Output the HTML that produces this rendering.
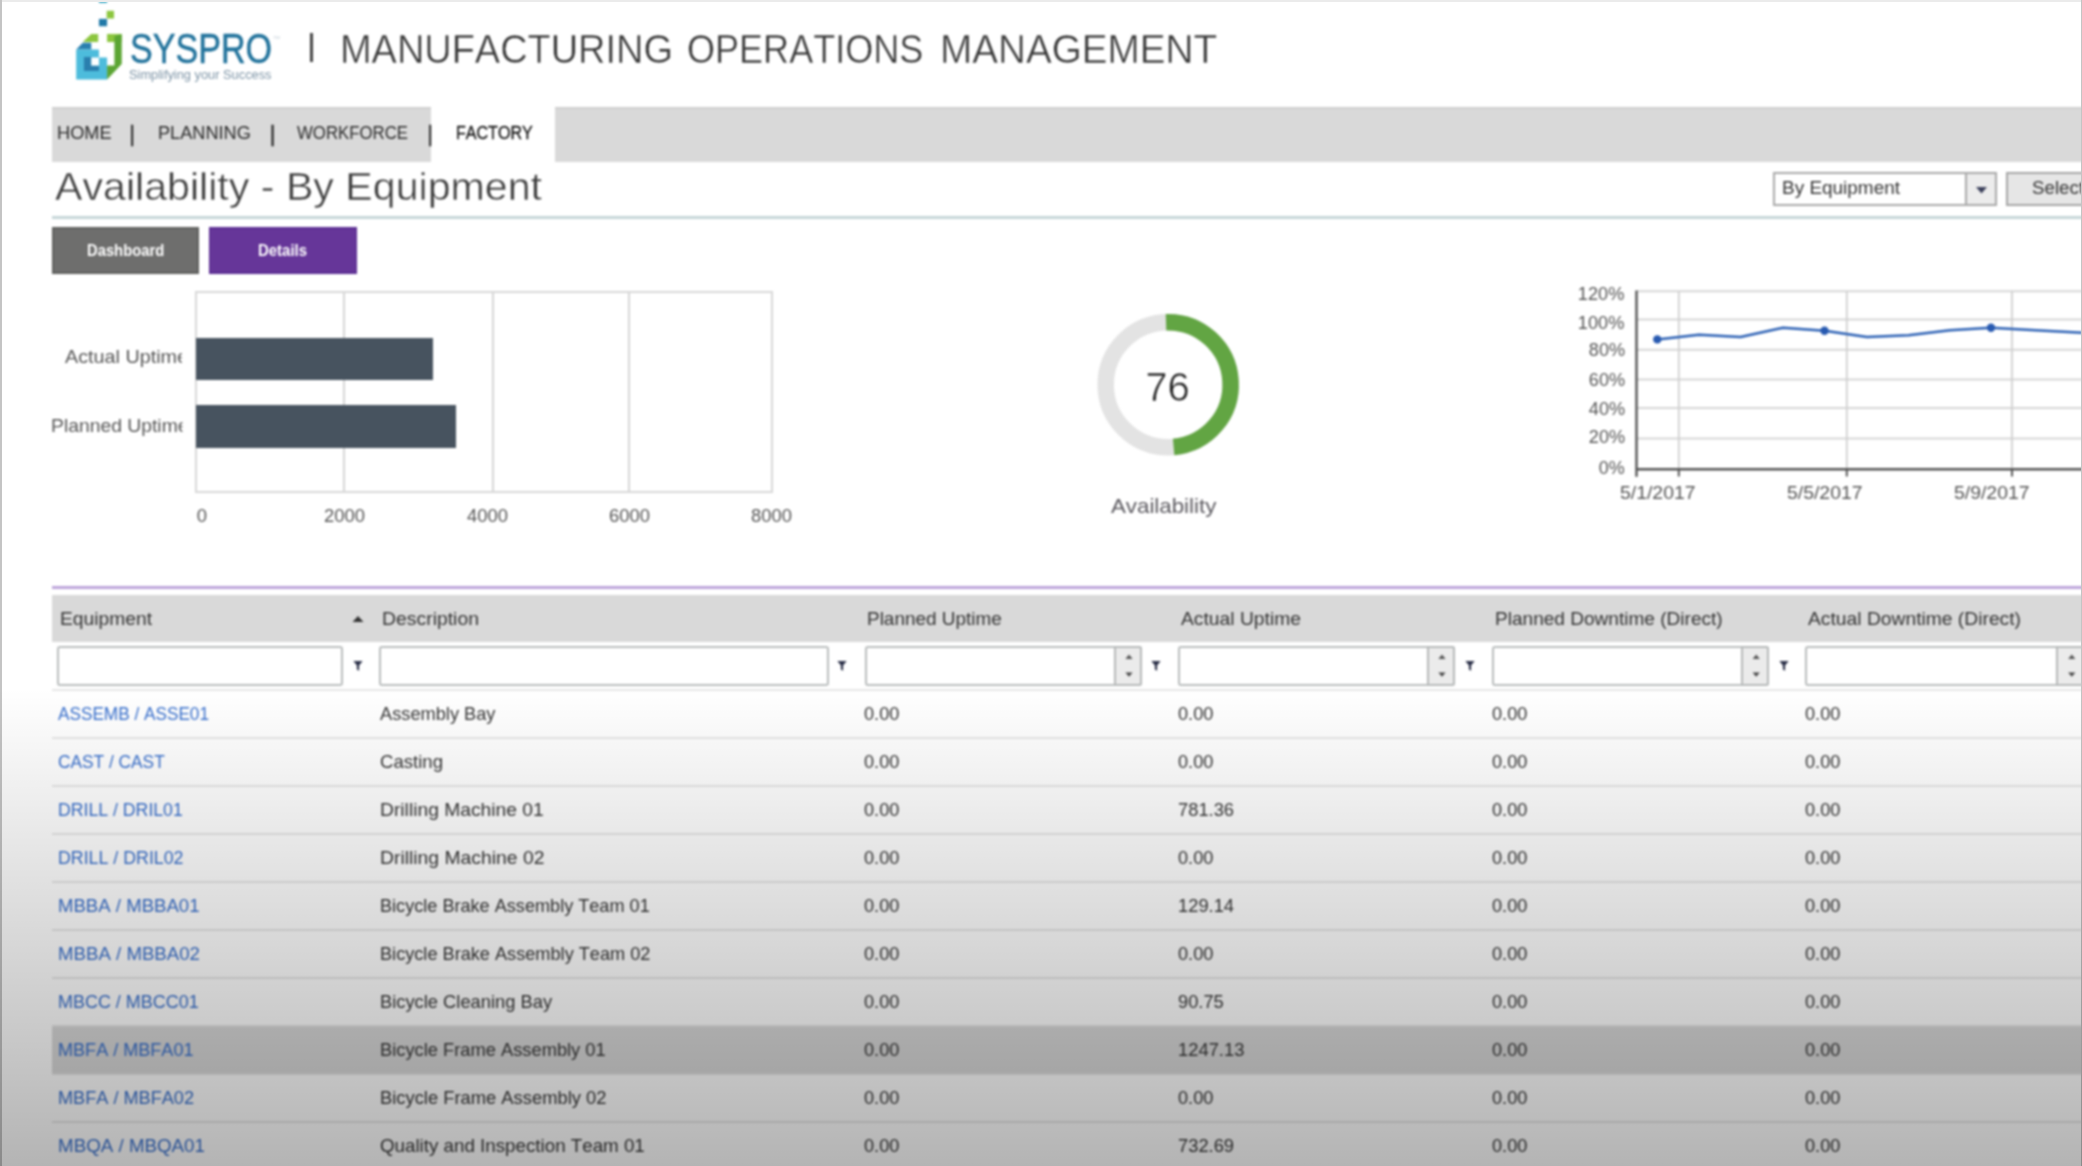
<!DOCTYPE html>
<html lang="en"><head><meta charset="utf-8"><title>SYSPRO Manufacturing Operations Management - Availability By Equipment</title>
<style>
html,body{margin:0;padding:0;background:#fff;overflow:hidden;}
body{width:2082px;height:1166px;position:relative;overflow:hidden;font-family:"Liberation Sans", sans-serif;font-kerning:none;}
#page{position:absolute;left:0;top:0;width:2082px;height:1166px;filter:blur(1px);}
#wrap{position:absolute;left:0;top:0;width:2082px;height:1166px;overflow:hidden;}
#frame{position:absolute;left:0;top:0;width:2082px;height:1166px;overflow:hidden;pointer-events:none;}
#page div,#frame div{position:absolute;box-sizing:border-box;}
#page svg{position:absolute;left:0;top:0;overflow:visible;}
.t{position:absolute;white-space:nowrap;line-height:1;display:block;}

.in{border:2px solid #b9bdbd;background:#fff;border-radius:3px;}
.sp{border:2px solid #b6b9b9;background:#ebebeb;border-radius:0 3px 3px 0;}
.row{border-top:2px solid #dcdcdc;}

</style></head><body><div id="wrap"><div id="page">
<div style="left:51.5px;top:106.5px;width:379.0px;height:55.0px;background:#d9d9d9;border-top:2px solid #cfcfcf;"></div>
<div style="left:554.5px;top:106.5px;width:1542.0px;height:55.0px;background:#d9d9d9;border-top:2px solid #cfcfcf;"></div>
<div style="left:310.0px;top:32.6px;width:2.6px;height:29.6px;background:#444;"></div>
<div style="left:51.5px;top:216.4px;width:2044.0px;height:2.6px;background:#c6d6d8;"></div>
<div style="left:1773.0px;top:172.0px;width:224.0px;height:34.0px;background:#fff;border:2px solid #a9a9a9;"></div>
<div style="left:1965.0px;top:172.0px;width:32.0px;height:34.0px;background:#ececec;border:2px solid #a9a9a9;"></div>
<div style="left:2006.0px;top:172.0px;width:90.0px;height:34.0px;background:#e6e6e6;border:2px solid #a6a6a6;"></div>
<div style="left:52.0px;top:227.3px;width:147.0px;height:46.5px;background:#6e6e6d;border:2px solid #5f605e;"></div>
<div style="left:208.5px;top:227.3px;width:148.0px;height:46.5px;background:#663699;border:2px solid #5a2c92;border-left-width:1px;border-right-width:1px;"></div>
<div style="left:194.5px;top:290.5px;width:578.0px;height:202.0px;background:transparent;border:2px solid #d8d8d8;"></div>
<div style="left:343.0px;top:291.0px;width:2.0px;height:201.0px;background:#d6d6d6;"></div>
<div style="left:492.4px;top:291.0px;width:2.0px;height:201.0px;background:#d6d6d6;"></div>
<div style="left:627.7px;top:291.0px;width:2.0px;height:201.0px;background:#d6d6d6;"></div>
<div style="left:195.5px;top:337.6px;width:237.5px;height:42.8px;background:#47535f;"></div>
<div style="left:195.5px;top:405.3px;width:260.0px;height:43.0px;background:#47535f;"></div>
<div style="left:51.5px;top:586.0px;width:2044.0px;height:3.0px;background:#bda5da;"></div>
<div style="left:51.5px;top:594.8px;width:2044.0px;height:47.2px;background:#d9d9d9;"></div>
<div class="in" style="left:57.2px;top:646.2px;width:286.2px;height:39.6px;"></div>
<div class="in" style="left:379.0px;top:646.2px;width:450.4px;height:39.6px;"></div>
<div class="in" style="left:865.0px;top:646.2px;width:277.0px;height:39.6px;"></div>
<div class="sp" style="left:1113.5px;top:646.2px;width:28.5px;height:39.6px;"></div>
<div class="in" style="left:1178.0px;top:646.2px;width:277.0px;height:39.6px;"></div>
<div class="sp" style="left:1426.5px;top:646.2px;width:28.5px;height:39.6px;"></div>
<div class="in" style="left:1492.2px;top:646.2px;width:277.0px;height:39.6px;"></div>
<div class="sp" style="left:1740.7px;top:646.2px;width:28.5px;height:39.6px;"></div>
<div class="in" style="left:1805.3px;top:646.2px;width:279.5px;height:39.6px;"></div>
<div class="sp" style="left:2056.3px;top:646.2px;width:28.5px;height:39.6px;"></div>
<div style="left:51.5px;top:689.0px;width:2044.0px;height:2.0px;background:#e6e6e6;"></div>
<div style="left:51.5px;top:737.0px;width:2044.0px;height:2.0px;background:#e6e6e6;"></div>
<div style="left:51.5px;top:785.0px;width:2044.0px;height:2.0px;background:#e6e6e6;"></div>
<div style="left:51.5px;top:833.0px;width:2044.0px;height:2.0px;background:#e6e6e6;"></div>
<div style="left:51.5px;top:881.0px;width:2044.0px;height:2.0px;background:#e6e6e6;"></div>
<div style="left:51.5px;top:929.0px;width:2044.0px;height:2.0px;background:#e6e6e6;"></div>
<div style="left:51.5px;top:977.0px;width:2044.0px;height:2.0px;background:#e6e6e6;"></div>
<div style="left:51.5px;top:1026.0px;width:2044.0px;height:47.5px;background:#d9d9d9;"></div>
<div style="left:51.5px;top:1025.0px;width:2044.0px;height:2.0px;background:#e6e6e6;"></div>
<div style="left:51.5px;top:1073.0px;width:2044.0px;height:2.0px;background:#e6e6e6;"></div>
<div style="left:51.5px;top:1121.0px;width:2044.0px;height:2.0px;background:#e6e6e6;"></div>
<svg width="2082" height="1166" viewBox="0 0 2082 1166">
<rect x="98.96" y="0.00" width="8.10" height="2.93" fill="#3eaac6"/>
<rect x="106.68" y="10.80" width="7.33" height="7.72" fill="#8cc63e"/>
<rect x="98.96" y="18.91" width="8.10" height="7.33" fill="#2079a8"/>
<polygon points="91.24,33.96 98.19,33.96 98.19,42.06 82.75,42.06" fill="#8cc63e"/>
<polygon points="107.06,33.96 121.73,33.96 121.73,42.06 107.06,42.06" fill="#8cc63e"/>
<polygon points="114.39,36.27 121.73,33.96 121.73,64.06 107.06,79.49 107.06,65.60 114.39,65.60" fill="#5ba533"/>
<polygon points="82.75,42.83 91.24,42.83 91.24,49.39 76.19,49.39" fill="#2a7fae"/>
<polygon points="76.19,49.39 98.96,49.39 98.96,57.50 107.06,57.50 107.06,79.49 76.19,79.49" fill="#4dbcdc"/>
<polygon points="83.91,57.11 91.24,57.11 91.24,65.60 98.96,65.60 98.96,71.00 83.91,71.00" fill="#2a7fae"/>
<rect x="91.24" y="57.50" width="7.72" height="8.10" fill="#fff"/>
<circle cx="1168.2" cy="384.7" r="62.5" fill="none" stroke="#e3e3e3" stroke-width="16.5"/>
<path d="M1166.02,322.24 A62.5,62.5 0 0 1 1173.65,446.96" fill="none" stroke="#62a543" stroke-width="16.5"/>
<line x1="1637" y1="291.3" x2="2094" y2="291.3" stroke="#d6d6d6" stroke-width="2"/>
<line x1="1637" y1="319.6" x2="2094" y2="319.6" stroke="#d6d6d6" stroke-width="2"/>
<line x1="1637" y1="349.7" x2="2094" y2="349.7" stroke="#d6d6d6" stroke-width="2"/>
<line x1="1637" y1="379.6" x2="2094" y2="379.6" stroke="#d6d6d6" stroke-width="2"/>
<line x1="1637" y1="407.9" x2="2094" y2="407.9" stroke="#d6d6d6" stroke-width="2"/>
<line x1="1637" y1="438.5" x2="2094" y2="438.5" stroke="#d6d6d6" stroke-width="2"/>
<line x1="1678.8" y1="291" x2="1678.8" y2="469" stroke="#d0d0d0" stroke-width="1.8"/>
<line x1="1678.8" y1="469" x2="1678.8" y2="476.5" stroke="#555" stroke-width="2"/>
<line x1="1846.8" y1="291" x2="1846.8" y2="469" stroke="#d0d0d0" stroke-width="1.8"/>
<line x1="1846.8" y1="469" x2="1846.8" y2="476.5" stroke="#555" stroke-width="2"/>
<line x1="2012" y1="291" x2="2012" y2="469" stroke="#d0d0d0" stroke-width="1.8"/>
<line x1="2012" y1="469" x2="2012" y2="476.5" stroke="#555" stroke-width="2"/>
<line x1="1636.5" y1="290.5" x2="1636.5" y2="476.8" stroke="#555" stroke-width="2.4"/>
<line x1="1636" y1="469.3" x2="2094" y2="469.3" stroke="#555" stroke-width="2.4"/>
<polyline points="1657.3,339.4 1699,334.7 1740.5,337 1783,327.7 1824.5,330.7 1867,337 1908.5,335.2 1950,330.2 1991,327.7 2031,330 2082,332.7" fill="none" stroke="#2b60b4" stroke-width="2.5" stroke-linejoin="round"/>
<circle cx="1657.3" cy="339.4" r="4.2" fill="#2759b0"/>
<circle cx="1824.5" cy="330.7" r="4.2" fill="#2759b0"/>
<circle cx="1991" cy="327.7" r="4.2" fill="#2759b0"/>
<polygon points="352.5,622 358,616 363.5,622" fill="#333"/>
<polygon points="1976,187 1987,187 1981.5,193.5" fill="#3a3f5a"/>
<path d="M353.4,661 h9.2 l-3.5,4.4 v5.4 l-2.2,-1.3 v-4.1 z" fill="#2b3048"/>
<path d="M837.4,661 h9.2 l-3.5,4.4 v5.4 l-2.2,-1.3 v-4.1 z" fill="#2b3048"/>
<path d="M1151.4,661 h9.2 l-3.5,4.4 v5.4 l-2.2,-1.3 v-4.1 z" fill="#2b3048"/>
<path d="M1465.4,661 h9.2 l-3.5,4.4 v5.4 l-2.2,-1.3 v-4.1 z" fill="#2b3048"/>
<path d="M1779.4,661 h9.2 l-3.5,4.4 v5.4 l-2.2,-1.3 v-4.1 z" fill="#2b3048"/>
<polygon points="1125.4,659 1129,654.6 1132.6,659" fill="#555"/>
<polygon points="1125.4,672.4 1129,676.8 1132.6,672.4" fill="#444"/>
<polygon points="1438.4,659 1442,654.6 1445.6,659" fill="#555"/>
<polygon points="1438.4,672.4 1442,676.8 1445.6,672.4" fill="#444"/>
<polygon points="1752.6000000000001,659 1756.2,654.6 1759.8,659" fill="#555"/>
<polygon points="1752.6000000000001,672.4 1756.2,676.8 1759.8,672.4" fill="#444"/>
<polygon points="2068.2000000000003,659 2071.8,654.6 2075.4,659" fill="#555"/>
<polygon points="2068.2000000000003,672.4 2071.8,676.8 2075.4,672.4" fill="#444"/>
</svg>
<span class="t" id="t0" style="left:56.7px;top:123.9px;font-size:18.5px;color:#2a2a2a;transform:scaleX(0.9838);transform-origin:0 50%;">HOME</span>
<span class="t" id="t1" style="left:129.2px;top:123.4px;font-size:22px;color:#2a2a2a;-webkit-text-stroke:0.4px #2a2a2a;">|</span>
<span class="t" id="t2" style="left:158.3px;top:123.9px;font-size:18.5px;color:#2a2a2a;transform:scaleX(0.9812);transform-origin:0 50%;">PLANNING</span>
<span class="t" id="t3" style="left:269.8px;top:123.4px;font-size:22px;color:#2a2a2a;-webkit-text-stroke:0.4px #2a2a2a;">|</span>
<span class="t" id="t4" style="left:297.4px;top:123.9px;font-size:18.5px;color:#2a2a2a;transform:scaleX(0.9075);transform-origin:0 50%;">WORKFORCE</span>
<span class="t" id="t5" style="left:427.2px;top:123.4px;font-size:22px;color:#2a2a2a;-webkit-text-stroke:0.4px #2a2a2a;">|</span>
<span class="t" id="t6" style="left:455.5px;top:123.9px;font-size:18.5px;color:#111;transform:scaleX(0.8677);transform-origin:0 50%;-webkit-text-stroke:0.3px #111;">FACTORY</span>
<span class="t" id="t7" style="left:129.8px;top:27.6px;font-size:42.5px;color:#22739c;transform:scaleX(0.8016);transform-origin:0 50%;-webkit-text-stroke:0.5px #22739c;">SYSPRO</span>
<span class="t" id="t8" style="left:273.0px;top:35.1px;font-size:7px;color:#c5d0d8;">™</span>
<span class="t" id="t9" style="left:129.3px;top:69.3px;font-size:12px;color:#7d94a6;transform:scaleX(1.0683);transform-origin:0 50%;">Simplifying your Success</span>
<span class="t" id="t10" style="left:340.0px;top:29.1px;font-size:40.5px;color:#363636;transform:scaleX(0.9365);transform-origin:0 50%;-webkit-text-stroke:0.5px #fff;">MANUFACTURING</span>
<span class="t" id="t11" style="left:687.3px;top:29.1px;font-size:40.5px;color:#363636;transform:scaleX(0.8899);transform-origin:0 50%;-webkit-text-stroke:0.5px #fff;">OPERATIONS</span>
<span class="t" id="t12" style="left:940.4px;top:29.1px;font-size:40.5px;color:#363636;transform:scaleX(0.9546);transform-origin:0 50%;-webkit-text-stroke:0.5px #fff;">MANAGEMENT</span>
<span class="t" id="t13" style="left:54.6px;top:167.8px;font-size:38.5px;color:#3c3c3c;transform:scaleX(1.0685);transform-origin:0 50%;-webkit-text-stroke:0.5px #fff;">Availability - By Equipment</span>
<span class="t" id="t14" style="left:1782.4px;top:177.9px;font-size:19px;color:#333;transform:scaleX(0.9975);transform-origin:0 50%;">By Equipment</span>
<span class="t" id="t15" style="left:2032.0px;top:177.9px;font-size:19px;color:#333;transform:scaleX(0.9846);transform-origin:0 50%;">Select</span>
<span class="t" id="t16" style="left:87.0px;top:241.9px;font-size:16.5px;color:#fff;font-weight:700;transform:scaleX(0.8957);transform-origin:0 50%;">Dashboard</span>
<span class="t" id="t17" style="left:258.2px;top:241.9px;font-size:16.5px;color:#fff;font-weight:700;transform:scaleX(0.9056);transform-origin:0 50%;">Details</span>
<span class="t" id="t18" style="left:65.4px;top:348.3px;font-size:18.5px;color:#555;transform:scaleX(1.0681);transform-origin:0 50%;clip-path:inset(-5px 5.8px -5px 0);">Actual Uptime</span>
<span class="t" id="t19" style="left:51.1px;top:417.1px;font-size:18.5px;color:#555;transform:scaleX(1.0445);transform-origin:0 50%;clip-path:inset(-5px 5.8px -5px 0);">Planned Uptime</span>
<span class="t" id="t20" style="left:196.7px;top:506.9px;font-size:18.5px;color:#555;">0</span>
<span class="t" id="t21" style="left:324.4px;top:506.9px;font-size:18.5px;color:#555;transform:scaleX(0.9962);transform-origin:50% 50%;">2000</span>
<span class="t" id="t22" style="left:466.7px;top:506.9px;font-size:18.5px;color:#555;transform:scaleX(0.9962);transform-origin:50% 50%;">4000</span>
<span class="t" id="t23" style="left:608.8px;top:506.9px;font-size:18.5px;color:#555;transform:scaleX(0.9962);transform-origin:50% 50%;">6000</span>
<span class="t" id="t24" style="left:751.0px;top:506.9px;font-size:18.5px;color:#555;transform:scaleX(0.9962);transform-origin:50% 50%;">8000</span>
<span class="t" id="t25" style="left:1145.0px;top:366.9px;font-size:40.5px;color:#1e1e1e;transform:scaleX(0.9897);transform-origin:50% 50%;-webkit-text-stroke:0.7px #fff;">76</span>
<span class="t" id="t26" style="left:1110.7px;top:494.7px;font-size:21px;color:#5a585e;transform:scaleX(1.0613);transform-origin:0 50%;">Availability</span>
<span class="t" id="t27" style="left:1577.2px;top:284.7px;font-size:18.5px;color:#555;transform:scaleX(0.9825);transform-origin:100% 50%;">120%</span>
<span class="t" id="t28" style="left:1577.2px;top:313.5px;font-size:18.5px;color:#555;transform:scaleX(0.9825);transform-origin:100% 50%;">100%</span>
<span class="t" id="t29" style="left:1587.5px;top:341.1px;font-size:18.5px;color:#555;transform:scaleX(0.9776);transform-origin:100% 50%;">80%</span>
<span class="t" id="t30" style="left:1587.5px;top:371.2px;font-size:18.5px;color:#555;transform:scaleX(0.9776);transform-origin:100% 50%;">60%</span>
<span class="t" id="t31" style="left:1587.5px;top:399.9px;font-size:18.5px;color:#555;transform:scaleX(0.9776);transform-origin:100% 50%;">40%</span>
<span class="t" id="t32" style="left:1587.5px;top:428.4px;font-size:18.5px;color:#555;transform:scaleX(0.9776);transform-origin:100% 50%;">20%</span>
<span class="t" id="t33" style="left:1597.8px;top:458.9px;font-size:18.5px;color:#555;transform:scaleX(0.9682);transform-origin:100% 50%;">0%</span>
<span class="t" id="t34" style="left:1619.7px;top:483.5px;font-size:18.5px;color:#555;transform:scaleX(1.0484);transform-origin:0 50%;">5/1/2017</span>
<span class="t" id="t35" style="left:1786.9px;top:483.5px;font-size:18.5px;color:#555;transform:scaleX(1.0484);transform-origin:0 50%;">5/5/2017</span>
<span class="t" id="t36" style="left:1954.4px;top:483.5px;font-size:18.5px;color:#555;transform:scaleX(1.0484);transform-origin:0 50%;">5/9/2017</span>
<span class="t" id="t37" style="left:60.4px;top:610.0px;font-size:18.5px;color:#333;transform:scaleX(1.0401);transform-origin:0 50%;">Equipment</span>
<span class="t" id="t38" style="left:382.3px;top:610.0px;font-size:18.5px;color:#333;transform:scaleX(1.0481);transform-origin:0 50%;">Description</span>
<span class="t" id="t39" style="left:867.4px;top:610.0px;font-size:18.5px;color:#333;transform:scaleX(1.0240);transform-origin:0 50%;">Planned Uptime</span>
<span class="t" id="t40" style="left:1180.9px;top:610.0px;font-size:18.5px;color:#333;transform:scaleX(1.0421);transform-origin:0 50%;">Actual Uptime</span>
<span class="t" id="t41" style="left:1495.0px;top:610.0px;font-size:18.5px;color:#333;transform:scaleX(1.0300);transform-origin:0 50%;">Planned Downtime (Direct)</span>
<span class="t" id="t42" style="left:1807.8px;top:610.0px;font-size:18.5px;color:#333;transform:scaleX(1.0412);transform-origin:0 50%;">Actual Downtime (Direct)</span>
<span class="t" id="t43" style="left:57.7px;top:704.8px;font-size:18.5px;color:#376fcd;transform:scaleX(0.9294);transform-origin:0 50%;">ASSEMB / ASSE01</span>
<span class="t" id="t44" style="left:379.5px;top:704.8px;font-size:18.5px;color:#363636;transform:scaleX(0.9853);transform-origin:0 50%;">Assembly Bay</span>
<span class="t" id="t45" style="left:864.3px;top:704.8px;font-size:18.5px;color:#363636;transform:scaleX(0.9815);transform-origin:0 50%;">0.00</span>
<span class="t" id="t46" style="left:1178.3px;top:704.8px;font-size:18.5px;color:#363636;transform:scaleX(0.9815);transform-origin:0 50%;">0.00</span>
<span class="t" id="t47" style="left:1491.7px;top:704.8px;font-size:18.5px;color:#363636;transform:scaleX(0.9815);transform-origin:0 50%;">0.00</span>
<span class="t" id="t48" style="left:1805.2px;top:704.8px;font-size:18.5px;color:#363636;transform:scaleX(0.9815);transform-origin:0 50%;">0.00</span>
<span class="t" id="t49" style="left:57.7px;top:752.8px;font-size:18.5px;color:#376fcd;transform:scaleX(0.9351);transform-origin:0 50%;">CAST / CAST</span>
<span class="t" id="t50" style="left:379.5px;top:752.8px;font-size:18.5px;color:#363636;transform:scaleX(1.0042);transform-origin:0 50%;">Casting</span>
<span class="t" id="t51" style="left:864.3px;top:752.8px;font-size:18.5px;color:#363636;transform:scaleX(0.9815);transform-origin:0 50%;">0.00</span>
<span class="t" id="t52" style="left:1178.3px;top:752.8px;font-size:18.5px;color:#363636;transform:scaleX(0.9815);transform-origin:0 50%;">0.00</span>
<span class="t" id="t53" style="left:1491.7px;top:752.8px;font-size:18.5px;color:#363636;transform:scaleX(0.9815);transform-origin:0 50%;">0.00</span>
<span class="t" id="t54" style="left:1805.2px;top:752.8px;font-size:18.5px;color:#363636;transform:scaleX(0.9815);transform-origin:0 50%;">0.00</span>
<span class="t" id="t55" style="left:57.7px;top:800.8px;font-size:18.5px;color:#376fcd;transform:scaleX(0.9556);transform-origin:0 50%;">DRILL / DRIL01</span>
<span class="t" id="t56" style="left:379.5px;top:800.8px;font-size:18.5px;color:#363636;transform:scaleX(1.0411);transform-origin:0 50%;">Drilling Machine 01</span>
<span class="t" id="t57" style="left:864.3px;top:800.8px;font-size:18.5px;color:#363636;transform:scaleX(0.9815);transform-origin:0 50%;">0.00</span>
<span class="t" id="t58" style="left:1178.3px;top:800.8px;font-size:18.5px;color:#363636;transform:scaleX(0.9904);transform-origin:0 50%;">781.36</span>
<span class="t" id="t59" style="left:1491.7px;top:800.8px;font-size:18.5px;color:#363636;transform:scaleX(0.9815);transform-origin:0 50%;">0.00</span>
<span class="t" id="t60" style="left:1805.2px;top:800.8px;font-size:18.5px;color:#363636;transform:scaleX(0.9815);transform-origin:0 50%;">0.00</span>
<span class="t" id="t61" style="left:57.7px;top:848.8px;font-size:18.5px;color:#376fcd;transform:scaleX(0.9610);transform-origin:0 50%;">DRILL / DRIL02</span>
<span class="t" id="t62" style="left:379.5px;top:848.8px;font-size:18.5px;color:#363636;transform:scaleX(1.0456);transform-origin:0 50%;">Drilling Machine 02</span>
<span class="t" id="t63" style="left:864.3px;top:848.8px;font-size:18.5px;color:#363636;transform:scaleX(0.9815);transform-origin:0 50%;">0.00</span>
<span class="t" id="t64" style="left:1178.3px;top:848.8px;font-size:18.5px;color:#363636;transform:scaleX(0.9815);transform-origin:0 50%;">0.00</span>
<span class="t" id="t65" style="left:1491.7px;top:848.8px;font-size:18.5px;color:#363636;transform:scaleX(0.9815);transform-origin:0 50%;">0.00</span>
<span class="t" id="t66" style="left:1805.2px;top:848.8px;font-size:18.5px;color:#363636;transform:scaleX(0.9815);transform-origin:0 50%;">0.00</span>
<span class="t" id="t67" style="left:57.7px;top:896.8px;font-size:18.5px;color:#376fcd;transform:scaleX(1.0045);transform-origin:0 50%;">MBBA / MBBA01</span>
<span class="t" id="t68" style="left:379.5px;top:896.8px;font-size:18.5px;color:#363636;transform:scaleX(0.9788);transform-origin:0 50%;">Bicycle Brake Assembly Team 01</span>
<span class="t" id="t69" style="left:864.3px;top:896.8px;font-size:18.5px;color:#363636;transform:scaleX(0.9815);transform-origin:0 50%;">0.00</span>
<span class="t" id="t70" style="left:1178.3px;top:896.8px;font-size:18.5px;color:#363636;transform:scaleX(0.9904);transform-origin:0 50%;">129.14</span>
<span class="t" id="t71" style="left:1491.7px;top:896.8px;font-size:18.5px;color:#363636;transform:scaleX(0.9815);transform-origin:0 50%;">0.00</span>
<span class="t" id="t72" style="left:1805.2px;top:896.8px;font-size:18.5px;color:#363636;transform:scaleX(0.9815);transform-origin:0 50%;">0.00</span>
<span class="t" id="t73" style="left:57.7px;top:944.8px;font-size:18.5px;color:#376fcd;transform:scaleX(1.0081);transform-origin:0 50%;">MBBA / MBBA02</span>
<span class="t" id="t74" style="left:379.5px;top:944.8px;font-size:18.5px;color:#363636;transform:scaleX(0.9813);transform-origin:0 50%;">Bicycle Brake Assembly Team 02</span>
<span class="t" id="t75" style="left:864.3px;top:944.8px;font-size:18.5px;color:#363636;transform:scaleX(0.9815);transform-origin:0 50%;">0.00</span>
<span class="t" id="t76" style="left:1178.3px;top:944.8px;font-size:18.5px;color:#363636;transform:scaleX(0.9815);transform-origin:0 50%;">0.00</span>
<span class="t" id="t77" style="left:1491.7px;top:944.8px;font-size:18.5px;color:#363636;transform:scaleX(0.9815);transform-origin:0 50%;">0.00</span>
<span class="t" id="t78" style="left:1805.2px;top:944.8px;font-size:18.5px;color:#363636;transform:scaleX(0.9815);transform-origin:0 50%;">0.00</span>
<span class="t" id="t79" style="left:57.7px;top:992.8px;font-size:18.5px;color:#376fcd;transform:scaleX(0.9707);transform-origin:0 50%;">MBCC / MBCC01</span>
<span class="t" id="t80" style="left:379.5px;top:992.8px;font-size:18.5px;color:#363636;transform:scaleX(0.9903);transform-origin:0 50%;">Bicycle Cleaning Bay</span>
<span class="t" id="t81" style="left:864.3px;top:992.8px;font-size:18.5px;color:#363636;transform:scaleX(0.9815);transform-origin:0 50%;">0.00</span>
<span class="t" id="t82" style="left:1178.3px;top:992.8px;font-size:18.5px;color:#363636;transform:scaleX(0.9871);transform-origin:0 50%;">90.75</span>
<span class="t" id="t83" style="left:1491.7px;top:992.8px;font-size:18.5px;color:#363636;transform:scaleX(0.9815);transform-origin:0 50%;">0.00</span>
<span class="t" id="t84" style="left:1805.2px;top:992.8px;font-size:18.5px;color:#363636;transform:scaleX(0.9815);transform-origin:0 50%;">0.00</span>
<span class="t" id="t85" style="left:57.7px;top:1040.8px;font-size:18.5px;color:#376fcd;transform:scaleX(0.9764);transform-origin:0 50%;">MBFA / MBFA01</span>
<span class="t" id="t86" style="left:379.5px;top:1040.8px;font-size:18.5px;color:#363636;transform:scaleX(0.9889);transform-origin:0 50%;">Bicycle Frame Assembly 01</span>
<span class="t" id="t87" style="left:864.3px;top:1040.8px;font-size:18.5px;color:#363636;transform:scaleX(0.9815);transform-origin:0 50%;">0.00</span>
<span class="t" id="t88" style="left:1178.3px;top:1040.8px;font-size:18.5px;color:#363636;transform:scaleX(0.9929);transform-origin:0 50%;">1247.13</span>
<span class="t" id="t89" style="left:1491.7px;top:1040.8px;font-size:18.5px;color:#363636;transform:scaleX(0.9815);transform-origin:0 50%;">0.00</span>
<span class="t" id="t90" style="left:1805.2px;top:1040.8px;font-size:18.5px;color:#363636;transform:scaleX(0.9815);transform-origin:0 50%;">0.00</span>
<span class="t" id="t91" style="left:57.7px;top:1088.8px;font-size:18.5px;color:#376fcd;transform:scaleX(0.9800);transform-origin:0 50%;">MBFA / MBFA02</span>
<span class="t" id="t92" style="left:379.5px;top:1088.8px;font-size:18.5px;color:#363636;transform:scaleX(0.9920);transform-origin:0 50%;">Bicycle Frame Assembly 02</span>
<span class="t" id="t93" style="left:864.3px;top:1088.8px;font-size:18.5px;color:#363636;transform:scaleX(0.9815);transform-origin:0 50%;">0.00</span>
<span class="t" id="t94" style="left:1178.3px;top:1088.8px;font-size:18.5px;color:#363636;transform:scaleX(0.9815);transform-origin:0 50%;">0.00</span>
<span class="t" id="t95" style="left:1491.7px;top:1088.8px;font-size:18.5px;color:#363636;transform:scaleX(0.9815);transform-origin:0 50%;">0.00</span>
<span class="t" id="t96" style="left:1805.2px;top:1088.8px;font-size:18.5px;color:#363636;transform:scaleX(0.9815);transform-origin:0 50%;">0.00</span>
<span class="t" id="t97" style="left:57.7px;top:1136.8px;font-size:18.5px;color:#376fcd;transform:scaleX(1.0140);transform-origin:0 50%;">MBQA / MBQA01</span>
<span class="t" id="t98" style="left:379.5px;top:1136.8px;font-size:18.5px;color:#363636;transform:scaleX(1.0137);transform-origin:0 50%;">Quality and Inspection Team 01</span>
<span class="t" id="t99" style="left:864.3px;top:1136.8px;font-size:18.5px;color:#363636;transform:scaleX(0.9815);transform-origin:0 50%;">0.00</span>
<span class="t" id="t100" style="left:1178.3px;top:1136.8px;font-size:18.5px;color:#363636;transform:scaleX(0.9904);transform-origin:0 50%;">732.69</span>
<span class="t" id="t101" style="left:1491.7px;top:1136.8px;font-size:18.5px;color:#363636;transform:scaleX(0.9815);transform-origin:0 50%;">0.00</span>
<span class="t" id="t102" style="left:1805.2px;top:1136.8px;font-size:18.5px;color:#363636;transform:scaleX(0.9815);transform-origin:0 50%;">0.00</span>
</div>
<div id="frame">
<div style="left:0.0px;top:0.0px;width:2082.0px;height:1.5px;background:#ebebeb;"></div>
<div style="left:0.0px;top:0.0px;width:1.5px;height:1166.0px;background:#c4c4c4;"></div>
<div style="left:2080.5px;top:0.0px;width:1.5px;height:1166.0px;background:#c4c4c4;"></div>
<div style="left:0;top:688px;width:2082px;height:478px;background:linear-gradient(to bottom,rgba(0,0,0,0) 0%,rgba(0,0,0,0.295) 100%);pointer-events:none;"></div>
</div></div></body></html>
